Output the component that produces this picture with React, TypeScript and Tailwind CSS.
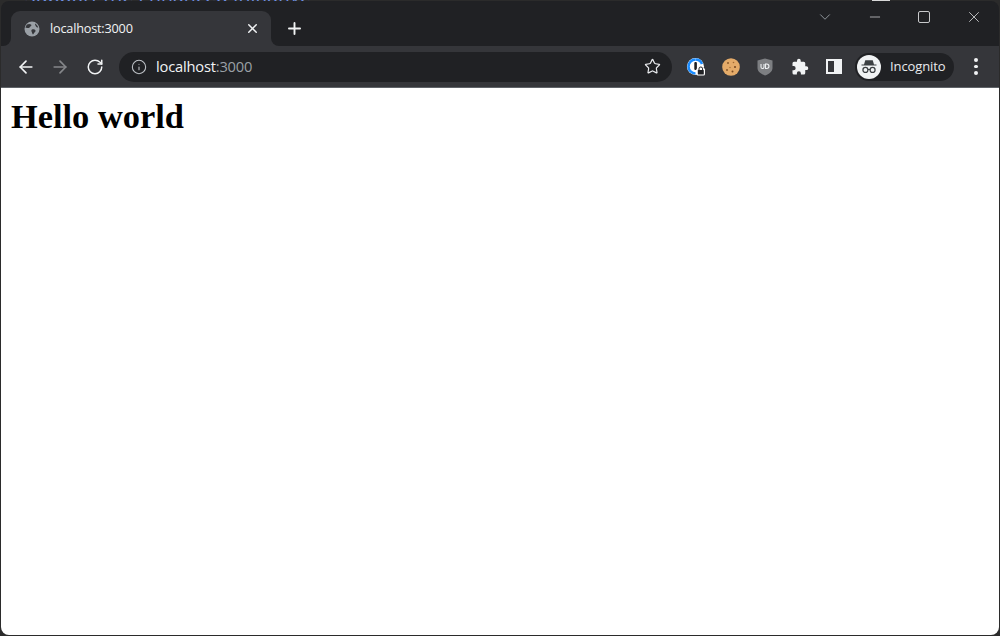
import { ArrowLeft, ArrowRight, ChevronDown, Info, Minus, Plus, RotateCw, Star, X } from 'lucide-react';

const uiFont = "font-['Open_Sans','Noto_Sans',sans-serif]";

function GlobeIcon() {
  return (
    <svg viewBox="0 0 16 16" className="w-[16px] h-[16px]">
      <circle cx="8" cy="8" r="7.5" fill="#9aa0a6" />
      <path d="M3 3.5c1.500-.8 3-.8 4 .1.800.7.300 1.500-.5 1.900-.9.400-.7 1.300-1.500 1.500C4 7.200 2.500 6.500 1.500 6.800 1.700 5.500 2.200 4.300 3 3.500Z" fill="#35363a" />
      <path d="M8 8.500c1.300-.5 3 .1 3.500 1 .4.800-.4 1.400-1 2-.6.700-.7 1.600-1.500 2-.8-.5-.8-1.600-1.200-2.400C7.400 10.200 7 9 8 8.500Z" fill="#35363a" />
      <path d="M11 2.500c1.500.8 2.800 2.300 3.200 4-.9.300-1.700-.2-2.200-1-.5-.900-1.200-1.800-1-3Z" fill="#35363a" />
    </svg>
  );
}

function PasswordIcon() {
  return (
    <svg viewBox="0 0 20 20" className="w-[20px] h-[20px]">
      <circle cx="9.500" cy="9.500" r="8.500" fill="#fff" />
      <path d="M9.500 2.500a7 7 0 1 0 0 14" fill="none" stroke="#1a8cff" strokeWidth="2.600" />
      <path d="M9.500 2.500a7 7 0 0 1 6.500 4.500" fill="none" stroke="#1a8cff" strokeWidth="2.600" />
      <rect x="8.300" y="5" width="2.600" height="8" rx="1" fill="#202124" />
      <rect x="10.500" y="11" width="8.500" height="7.500" rx="1.500" fill="#fff" />
      <rect x="11.800" y="13" width="6" height="4.500" rx=".6" fill="#202124" />
      <path d="M13 13v-1.200a1.800 1.800 0 0 1 3.600 0V13" fill="none" stroke="#202124" strokeWidth="1" />
    </svg>
  );
}

function CookieIcon() {
  return (
    <svg viewBox="0 0 18 18" className="w-[18px] h-[18px]">
      <circle cx="9" cy="9" r="8.800" fill="#e4ab69" />
      <circle cx="6" cy="5" r="1" fill="#8a5a2b" />
      <circle cx="11.500" cy="4.500" r=".8" fill="#a06a34" />
      <circle cx="13" cy="9" r="1.100" fill="#7a4a22" />
      <circle cx="8" cy="9.500" r=".7" fill="#a06a34" />
      <circle cx="5" cy="12" r="1" fill="#8a5a2b" />
      <circle cx="10.500" cy="13.500" r="1" fill="#7a4a22" />
    </svg>
  );
}

function ShieldIcon() {
  return (
    <svg viewBox="0 0 16 18" className="w-[16px] h-[18px]">
      <path d="M8 .5 15.500 2.500V10c0 3.500-3.500 6-7.500 7.500C4 16 .5 13.500.5 10V2.500Z" fill="#7d7f82" />
      <path d="M4 6v3a1.500 1.500 0 0 0 3 0V6" fill="none" stroke="#eceff1" strokeWidth="1.100" />
      <path d="M8.500 6v4.500h1.200a2.250 2.250 0 0 0 0-4.500Z" fill="none" stroke="#eceff1" strokeWidth="1.100" />
    </svg>
  );
}

function PuzzleIcon() {
  return (
    <svg viewBox="0 0 24 24" className="w-[18px] h-[18px]" fill="#f1f3f4">
      <path d="M20.500 11H19V7a2 2 0 0 0-2-2h-4V3.500a2.500 2.500 0 0 0-5 0V5H4a2 2 0 0 0-2 2v3.800h1.500a2.700 2.700 0 0 1 0 5.400H2V20a2 2 0 0 0 2 2h3.800v-1.500a2.700 2.700 0 0 1 5.400 0V22H17a2 2 0 0 0 2-2v-4h1.500a2.500 2.500 0 0 0 0-5Z" />
    </svg>
  );
}

function SidePanelIcon() {
  return (
    <div className="w-[16px] h-[15px] border-2 border-[#f1f3f4] flex justify-end">
      <div className="w-[6px] bg-[#f1f3f4]" />
    </div>
  );
}

function IncognitoIcon() {
  return (
    <div className="w-[24px] h-[24px] rounded-full bg-[#f1f3f4] flex items-center justify-center">
      <svg viewBox="0 0 24 24" className="w-[20px] h-[20px]" fill="#3c4043">
        <path d="M7.500 4h9l1.500 5h3v1.200H3V9h3Z" />
        <circle cx="7.700" cy="15.500" r="3" fill="none" stroke="#3c4043" strokeWidth="1.500" />
        <circle cx="16.300" cy="15.500" r="3" fill="none" stroke="#3c4043" strokeWidth="1.500" />
        <path d="M10.700 15h2.600" stroke="#3c4043" strokeWidth="1.300" />
      </svg>
    </div>
  );
}

export default function App() {
  return (
    <div className={`relative w-[1000px] h-[636px] overflow-hidden bg-[#2b2b2b] ${uiFont}`}>
      <div className="absolute left-[25px] top-[-14px] text-[19.500px] leading-[20px] text-[#6f8fe0] whitespace-nowrap">
        Support the Enhanced Initiative
      </div>
      <div className="absolute top-0 left-[872px] w-[18px] h-[1px] bg-[#d8d8d8]" />

      <div className="absolute inset-0 mt-[1px] ml-[1px] mr-[1px] mb-[1px] flex flex-col rounded-[8px] overflow-hidden">
        <div className="h-[45px] shrink-0 bg-[#202124] flex items-end pl-[10px]">
          <div className="relative w-[260px] h-[35px] rounded-t-[9px] bg-[#35363a] flex items-center pl-[13px] pr-[11px]">
            <div className="absolute bottom-0 left-[-8px] w-[8px] h-[8px] bg-[#35363a]">
              <div className="w-full h-full bg-[#202124] rounded-br-[8px]" />
            </div>
            <div className="absolute bottom-0 right-[-8px] w-[8px] h-[8px] bg-[#35363a]">
              <div className="w-full h-full bg-[#202124] rounded-bl-[8px]" />
            </div>
            <GlobeIcon />
            <span className="ml-[10px] text-[12.700px] tracking-[-0.2px] text-[#f1f3f4]">localhost:3000</span>
            <X className="ml-auto w-[15px] h-[15px] text-[#f1f3f4]" strokeWidth={2.400} />
          </div>
          <div className="self-end h-[35px] flex items-center ml-[14px]">
            <Plus className="w-[19px] h-[19px] text-[#f1f3f4]" strokeWidth={2.400} />
          </div>
          <div className="flex-1 self-start h-[24px] mt-[4px] flex items-center justify-end">
            <ChevronDown className="w-[18px] h-[18px] text-[#9aa0a6] mr-[33px]" strokeWidth={1.200} />
            <Minus className="w-[16px] h-[16px] text-[#c8c9cb] mr-[35px]" strokeWidth={1.200} />
            <div className="w-[12px] h-[12px] border border-[#c8c9cb] rounded-[2px] mr-[35px]" />
            <X className="w-[18px] h-[18px] text-[#d8d9da] mr-[16px]" strokeWidth={1.100} />
          </div>
        </div>

        <div className="h-[41px] shrink-0 bg-[#35363a] flex items-center pl-[15px] pr-[15px]">
          <ArrowLeft className="w-[20px] h-[20px] text-[#f1f3f4]" strokeWidth={2} />
          <ArrowRight className="w-[20px] h-[20px] text-[#85878a] ml-[14px]" strokeWidth={2} />
          <RotateCw className="w-[18px] h-[18px] text-[#f1f3f4] ml-[16px]" strokeWidth={2} />
          <div className="ml-[15px] w-[553px] h-[30px] rounded-full bg-[#202124] flex items-center pl-[12px] pr-[11px]">
            <Info className="w-[16px] h-[16px] text-[#bdc1c6]" strokeWidth={1.600} />
            <span className="ml-[9px] text-[14.700px] tracking-[-0.2px] text-[#f1f3f4]">
              localhost<span className="text-[#9aa0a6]">:3000</span>
            </span>
            <Star className="ml-auto w-[17px] h-[17px] text-[#e8eaed]" strokeWidth={1.700} />
          </div>
          <div className="ml-[14px] flex items-center">
            <PasswordIcon />
            <div className="ml-[16px]"><CookieIcon /></div>
            <div className="ml-[17px]"><ShieldIcon /></div>
            <div className="ml-[18px]"><PuzzleIcon /></div>
            <div className="ml-[17px]"><SidePanelIcon /></div>
          </div>
          <div className="ml-[13px] h-[28px] w-[99px] rounded-full bg-[#202124] flex items-center pl-[2px]">
            <IncognitoIcon />
            <span className="ml-[9px] text-[13px] tracking-[-0.1px] text-[#e8eaed]">Incognito</span>
          </div>
          <div className="ml-[20px] flex flex-col gap-[3px]">
            <div className="w-[3.500px] h-[3.500px] rounded-full bg-[#f1f3f4]" />
            <div className="w-[3.500px] h-[3.500px] rounded-full bg-[#f1f3f4]" />
            <div className="w-[3.500px] h-[3.500px] rounded-full bg-[#f1f3f4]" />
          </div>
        </div>

        <div className="flex-1 bg-white border-t border-[#5f6368] pl-[10px]">
          <h1 className="mt-[8px] font-['Liberation_Serif',serif] font-bold text-[34.400px] leading-[40px] text-black">
            Hello world
          </h1>
        </div>
      </div>
    </div>
  );
}
